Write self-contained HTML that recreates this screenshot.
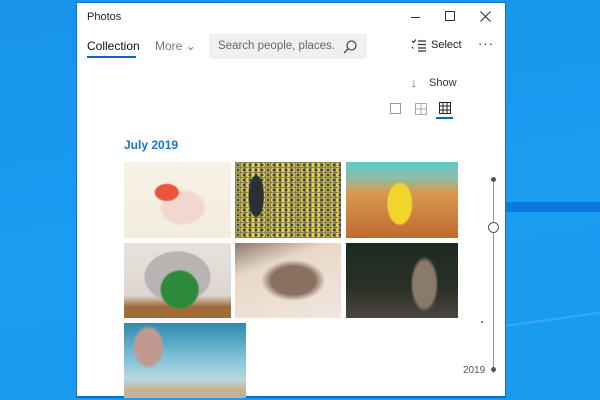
<!DOCTYPE html>
<html><head><meta charset="utf-8"><style>
*{margin:0;padding:0;box-sizing:border-box}
body{width:600px;height:400px;overflow:hidden;position:relative;font-family:"Liberation Sans",sans-serif;
background:linear-gradient(170deg,#1894ea 0%,#1a9cf1 50%,#1b9af0 100%);}
.band{position:absolute;left:505px;top:202px;width:95px;height:10px;background:#0b78dc}
.band2{position:absolute;left:505px;top:325px;width:120px;height:2px;background:#36aaf5;transform:rotate(-8deg);transform-origin:left}
.win{position:absolute;left:76px;top:2px;width:430px;height:396px;background:#fff;border:1px solid #1470c0;border-bottom:2px solid #0f6cc0}
.a{position:absolute;white-space:nowrap}
.ph{position:absolute;overflow:hidden}
</style></head><body>
<div class="band"></div><div class="band2"></div>
<div class="win">
 <div class="a" style="left:10px;top:8px;font-size:11px;color:#222">Photos</div>
 <div class="a" style="left:334px;top:14px;width:9px;height:1px;background:#333"></div>
 <div class="a" style="left:368px;top:8px;width:10px;height:10px;border:1px solid #333"></div>
 <svg class="a" style="left:403px;top:8px" width="11" height="11"><path d="M.5.5l10 10M10.5.5l-10 10" stroke="#333" stroke-width="1.1"/></svg>
 <div class="a" style="left:10px;top:36px;font-size:12px;color:#111">Collection</div>
 <div class="a" style="left:10px;top:53px;width:49px;height:2px;background:#0a63c9"></div>
 <div class="a" style="left:78px;top:36px;font-size:12px;color:#777">More ⌄</div>
 <div class="a" style="left:132px;top:31px;width:158px;height:25px;background:#f0f0f0"></div>
 <div class="a" style="left:141px;top:37px;font-size:11.5px;color:#666">Search people, places.</div>
 <svg class="a" style="left:265px;top:36px" width="16" height="16"><circle cx="9.5" cy="6.5" r="4.5" fill="none" stroke="#444" stroke-width="1.2"/><line x1="6.3" y1="9.7" x2="2" y2="14" stroke="#444" stroke-width="1.3"/></svg>
 <svg class="a" style="left:334px;top:36px" width="16" height="13"><path d="M1 2l1.5 1.5 2.5-3M7 2h8M7 5.5h8M7 9h8M7 12h8M1 8l1.5 1.5" stroke="#333" fill="none" stroke-width="1.2"/></svg>
 <div class="a" style="left:354px;top:36px;font-size:11px;color:#222">Select</div>
 <div class="a" style="left:401px;top:33px;font-size:13px;color:#222;letter-spacing:1px">···</div>
 <div class="a" style="left:334px;top:73px;font-size:12px;color:#666">↓</div>
 <div class="a" style="left:352px;top:74px;font-size:11px;color:#333">Show</div>
 <div class="a" style="left:313px;top:100px;width:11px;height:11px;border:1px solid #999"></div>
 <svg class="a" style="left:338px;top:100px" width="12" height="12"><path d="M.5.5h11v11H.5zM6 .5v11M.5 6h11" fill="none" stroke="#aaa"/></svg>
 <svg class="a" style="left:362px;top:99px" width="12" height="12"><path d="M.5.5h11v11H.5zM4 .5v11M8 .5v11M.5 4h11M.5 8h11" fill="none" stroke="#222"/></svg>
 <div class="a" style="left:359px;top:114px;width:17px;height:2px;background:#0a63c9"></div>
 <div class="a" style="left:47px;top:135px;font-size:12px;font-weight:bold;color:#1874d2">July 2019</div>
 <div class="a" style="left:416px;top:178px;width:1px;height:192px;background:#999"></div>
 <div class="a" style="left:414px;top:174px;width:5px;height:5px;border-radius:50%;background:#555"></div>
 <div class="a" style="left:414px;top:364px;width:5px;height:5px;border-radius:50%;background:#555"></div>
 <div class="a" style="left:411px;top:219px;width:11px;height:11px;border-radius:50%;background:#fff;border:1px solid #555"></div>
 <div class="a" style="left:404px;top:318px;width:2px;height:2px;background:#777"></div>
 <div class="a" style="left:386px;top:362px;font-size:10px;color:#555">2019</div>

 <div class="ph" style="left:47px;top:159px;width:107px;height:76px;background:radial-gradient(ellipse at 40% 40%,#e8553a 0 11px,transparent 13px),radial-gradient(ellipse at 55% 60%,#f0d8d0 0 20px,transparent 24px),linear-gradient(#f7f2e6,#f3ede0)"></div>
 <div class="ph" style="left:158px;top:159px;width:106px;height:76px;background:radial-gradient(ellipse 8px 22px at 20% 45%,#2a3036 0 90%,transparent 100%),radial-gradient(circle at 3px 3px,#3a4656 1.3px,transparent 1.6px) 0 0/6px 5px,radial-gradient(circle at 3px 3px,#e2d050 2px,transparent 2.4px) 0 0/5px 5px,#8a8048"></div>
 <div class="ph" style="left:269px;top:159px;width:112px;height:76px;background:radial-gradient(ellipse 13px 22px at 48% 55%,#f0d62a 0 90%,transparent 100%),linear-gradient(#5ec8c8 0,#8ac0a8 20%,#d89a50 40%,#c06a30 100%)"></div>
 <div class="ph" style="left:47px;top:240px;width:107px;height:75px;background:radial-gradient(circle at 52% 62%,#2c8a3a 0 18px,transparent 20px),radial-gradient(ellipse at 50% 45%,#b8b4b4 0 32px,transparent 34px),linear-gradient(#e8e2de 0,#ddd6d0 70%,#a06a3a 85%)"></div>
 <div class="ph" style="left:158px;top:240px;width:106px;height:75px;background:radial-gradient(ellipse at 55% 50%,#8a7060 0 22px,transparent 32px),linear-gradient(160deg,#8a7a70 0,#e8d8c8 30%,#f2e6de 100%)"></div>
 <div class="ph" style="left:269px;top:240px;width:112px;height:75px;background:radial-gradient(ellipse 14px 28px at 70% 55%,#8a7a6a 0 80%,transparent 100%),linear-gradient(#1e2a22,#2a3026 60%,#4a4640)"></div>
 <div class="ph" style="left:47px;top:320px;width:122px;height:75px;background:radial-gradient(ellipse 16px 22px at 20% 32%,#c09a90 0 80%,transparent 100%),linear-gradient(#2e8ab0 0,#7ec0d6 45%,#b8d8de 75%,#c8b090 90%)"></div>
</div>
</body></html>
